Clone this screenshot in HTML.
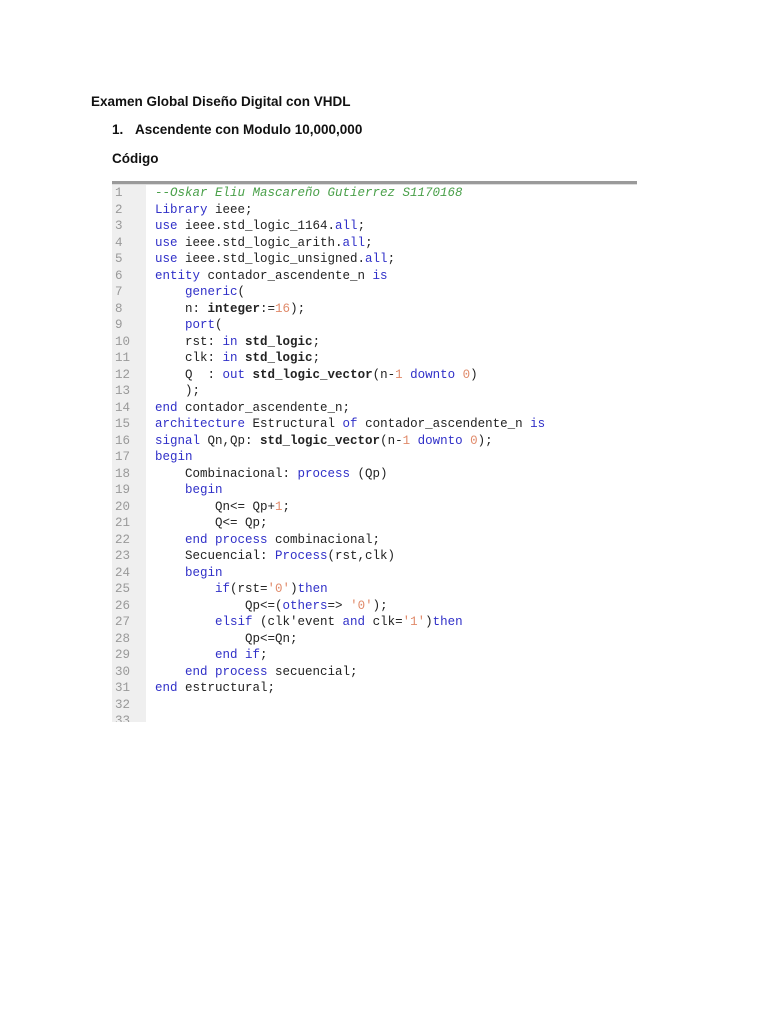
<!DOCTYPE html>
<html><head><meta charset="utf-8"><style>
body{margin:0;width:768px;height:1024px;background:#fff;position:relative;font-family:"Liberation Sans",sans-serif;}
.t{position:absolute;font-weight:bold;font-size:13.5px;color:#111;white-space:nowrap}
.code{position:absolute;left:112px;top:181px;width:525px;height:541px;background:#fff;overflow:hidden}
.bar{position:absolute;left:0;top:0;width:525px;height:3px;background:#9a9a9a;border-bottom:1px solid #ddd}
.gut{position:absolute;left:0;top:4px;width:34px;height:537px;background:#efefef}
pre{position:absolute;margin:0;left:0;top:4px;font-family:"Liberation Mono",monospace;font-size:12.5px;line-height:16.5px;color:#222}
.n{color:#999;display:inline-block;width:40px;padding-left:3px}
.k{color:#3030c8}.c{color:#4aa04a;font-style:italic}.o{color:#e08a6a}.b{font-weight:bold}
</style></head><body>
<div class="t" style="left:91px;top:94px">Examen Global Diseño Digital con VHDL</div>
<div class="t" style="left:112px;top:122px">1.</div>
<div class="t" style="left:135px;top:122px">Ascendente con Modulo 10,000,000</div>
<div class="t" style="left:112px;top:151px">Código</div>
<div class="code"><div class="gut"></div><div class="bar"></div>
<pre><span class="n">1</span><span class="c">--Oskar Eliu Mascareño Gutierrez S1170168</span>
<span class="n">2</span><span class="k">Library</span> ieee;
<span class="n">3</span><span class="k">use</span> ieee.std_logic_1164.<span class="k">all</span>;
<span class="n">4</span><span class="k">use</span> ieee.std_logic_arith.<span class="k">all</span>;
<span class="n">5</span><span class="k">use</span> ieee.std_logic_unsigned.<span class="k">all</span>;
<span class="n">6</span><span class="k">entity</span> contador_ascendente_n <span class="k">is</span>
<span class="n">7</span>    <span class="k">generic</span>(
<span class="n">8</span>    n: <span class="b">integer</span>:=<span class="o">16</span>);
<span class="n">9</span>    <span class="k">port</span>(
<span class="n">10</span>    rst: <span class="k">in</span> <span class="b">std_logic</span>;
<span class="n">11</span>    clk: <span class="k">in</span> <span class="b">std_logic</span>;
<span class="n">12</span>    Q  : <span class="k">out</span> <span class="b">std_logic_vector</span>(n-<span class="o">1</span> <span class="k">downto</span> <span class="o">0</span>)
<span class="n">13</span>    );
<span class="n">14</span><span class="k">end</span> contador_ascendente_n;
<span class="n">15</span><span class="k">architecture</span> Estructural <span class="k">of</span> contador_ascendente_n <span class="k">is</span>
<span class="n">16</span><span class="k">signal</span> Qn,Qp: <span class="b">std_logic_vector</span>(n-<span class="o">1</span> <span class="k">downto</span> <span class="o">0</span>);
<span class="n">17</span><span class="k">begin</span>
<span class="n">18</span>    Combinacional: <span class="k">process</span> (Qp)
<span class="n">19</span>    <span class="k">begin</span>
<span class="n">20</span>        Qn&lt;= Qp+<span class="o">1</span>;
<span class="n">21</span>        Q&lt;= Qp;
<span class="n">22</span>    <span class="k">end process</span> combinacional;
<span class="n">23</span>    Secuencial: <span class="k">Process</span>(rst,clk)
<span class="n">24</span>    <span class="k">begin</span>
<span class="n">25</span>        <span class="k">if</span>(rst=<span class="o">'0'</span>)<span class="k">then</span>
<span class="n">26</span>            Qp&lt;=(<span class="k">others</span>=&gt; <span class="o">'0'</span>);
<span class="n">27</span>        <span class="k">elsif</span> (clk'event <span class="k">and</span> clk=<span class="o">'1'</span>)<span class="k">then</span>
<span class="n">28</span>            Qp&lt;=Qn;
<span class="n">29</span>        <span class="k">end if</span>;
<span class="n">30</span>    <span class="k">end process</span> secuencial;
<span class="n">31</span><span class="k">end</span> estructural;
<span class="n">32</span>
<span class="n">33</span></pre></div>
</body></html>
